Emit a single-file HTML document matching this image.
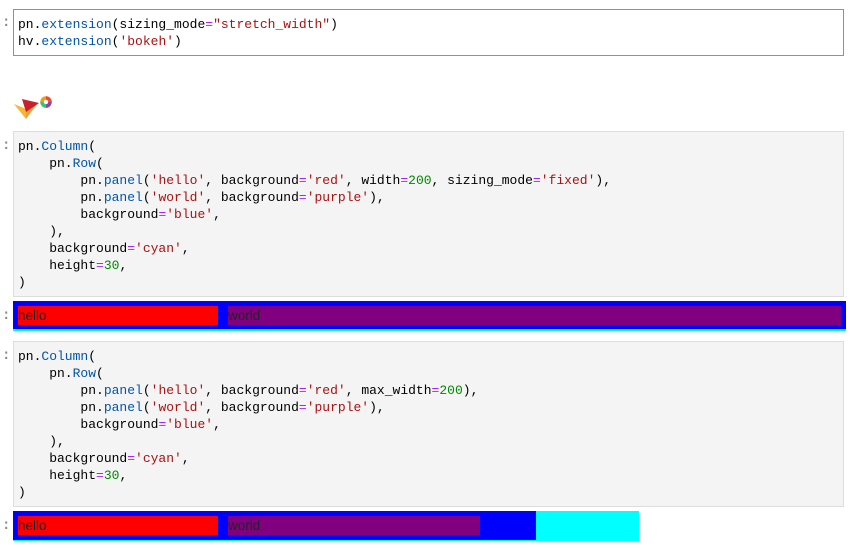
<!DOCTYPE html>
<html><head><style>
body{margin:0;background:#fff;width:857px;height:548px;overflow:hidden;position:relative;font-family:"Liberation Mono",monospace;font-size:13px;}
.p{position:absolute;left:2px;color:#888;font-size:14px;font-weight:bold;}
.cell{position:absolute;left:13px;width:831px;box-sizing:border-box;}
pre{margin:0;font-family:"Liberation Mono",monospace;font-size:13px;line-height:17px;color:#000;padding-left:4px;}
.k{color:#05a}.s{color:#a11}.n{color:#080}.o{color:#a2f}
.box{position:absolute;font-family:"Liberation Sans",sans-serif;font-size:13.5px;color:#222;line-height:19px;}
</style></head><body>
<div class="p" style="top:15px">:</div>
<div class="cell" style="top:9px;height:47px;border:1px solid #42a5f5;padding-top:6px"><pre>pn.<span class="k">extension</span>(sizing_mode<span class="o">=</span><span class="s">"stretch_width"</span>)
hv.<span class="k">extension</span>(<span class="s">'bokeh'</span>)</pre></div>

<svg style="position:absolute;left:13px;top:95px" width="42" height="25" viewBox="0 0 42 25">
<polygon points="1,9 13,24 13,14" fill="#f7b733"/>
<polygon points="13,14 13,24 24,9" fill="#e8a13a"/>
<polygon points="9,4 26,8 13,17" fill="#c9202a"/>
<circle cx="33" cy="7" r="4" fill="none" stroke="#f39c12" stroke-width="3.5"/>
<path d="M33 3 A4 4 0 0 1 37 7" fill="none" stroke="#e74c3c" stroke-width="3.5"/>
<path d="M37 7 A4 4 0 0 1 33 11" fill="none" stroke="#8e44ad" stroke-width="3.5"/>
<path d="M33 11 A4 4 0 0 1 29 7" fill="none" stroke="#2ecc71" stroke-width="3.5"/>
</svg>

<div class="p" style="top:138px">:</div>
<div class="cell" style="top:131px;height:166px;background:#f4f4f4;border:1px solid #ddd;padding-top:6px"><pre>pn.<span class="k">Column</span>(
    pn.<span class="k">Row</span>(
        pn.<span class="k">panel</span>(<span class="s">'hello'</span>, background<span class="o">=</span><span class="s">'red'</span>, width<span class="o">=</span><span class="n">200</span>, sizing_mode<span class="o">=</span><span class="s">'fixed'</span>),
        pn.<span class="k">panel</span>(<span class="s">'world'</span>, background<span class="o">=</span><span class="s">'purple'</span>),
        background<span class="o">=</span><span class="s">'blue'</span>,
    ),
    background<span class="o">=</span><span class="s">'cyan'</span>,
    height<span class="o">=</span><span class="n">30</span>,
)</pre></div>

<div class="p" style="top:308px">:</div>
<div style="position:absolute;left:13px;top:301px;width:833px;height:30px;background:#0ff"></div>
<div style="position:absolute;left:13px;top:301px;width:833px;height:28px;background:#00f"></div>
<div class="box" style="left:18px;top:306px;width:200px;height:19px;background:#f00">hello</div>
<div class="box" style="left:228px;top:306px;width:613px;height:19px;background:#800080">world</div>

<div class="p" style="top:348px">:</div>
<div class="cell" style="top:341px;height:166px;background:#f4f4f4;border:1px solid #ddd;padding-top:6px"><pre>pn.<span class="k">Column</span>(
    pn.<span class="k">Row</span>(
        pn.<span class="k">panel</span>(<span class="s">'hello'</span>, background<span class="o">=</span><span class="s">'red'</span>, max_width<span class="o">=</span><span class="n">200</span>),
        pn.<span class="k">panel</span>(<span class="s">'world'</span>, background<span class="o">=</span><span class="s">'purple'</span>),
        background<span class="o">=</span><span class="s">'blue'</span>,
    ),
    background<span class="o">=</span><span class="s">'cyan'</span>,
    height<span class="o">=</span><span class="n">30</span>,
)</pre></div>

<div class="p" style="top:518px">:</div>
<div style="position:absolute;left:13px;top:511px;width:626px;height:30px;background:#0ff"></div>
<div style="position:absolute;left:13px;top:511px;width:523px;height:29px;background:#00f"></div>
<div class="box" style="left:18px;top:516px;width:200px;height:19px;background:#f00">hello</div>
<div class="box" style="left:228px;top:516px;width:252px;height:19px;background:#800080">world</div>
</body></html>
